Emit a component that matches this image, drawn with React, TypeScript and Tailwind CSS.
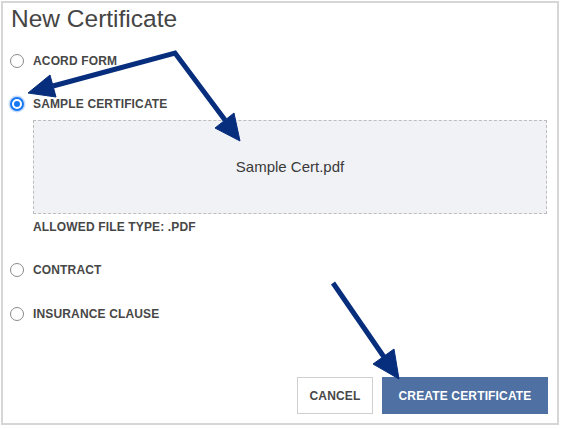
import React, { useState } from 'react';

type Option = { id: string; label: string };

const options: Option[] = [
  { id: 'acord', label: 'ACORD FORM' },
  { id: 'sample', label: 'SAMPLE CERTIFICATE' },
  { id: 'contract', label: 'CONTRACT' },
  { id: 'clause', label: 'INSURANCE CLAUSE' },
];

const Radio: React.FC<{ checked: boolean }> = ({ checked }) =>
  checked ? (
    <span className="w-[14px] h-[14px] rounded-full border-2 border-[#1877f2] bg-white flex items-center justify-center shadow-[0_0_0_1.5px_rgba(24,119,242,0.25)]">
      <span className="w-[6px] h-[6px] rounded-full bg-[#1877f2]" />
    </span>
  ) : (
    <span className="w-[14px] h-[14px] rounded-full border border-[#8a8a8a] bg-white" />
  );

const Arrows = () => (
  <svg className="absolute left-0 top-0 pointer-events-none" width="563" height="429" viewBox="0 0 563 429">
    <g fill="#072d7d" stroke="#072d7d">
      <polyline points="53,85 175,52 225,119" fill="none" strokeWidth="5" strokeLinejoin="miter" />
      <polygon points="28,92 56,96 50,74" strokeWidth="1" />
      <polygon points="240,140 215,127 234,112" strokeWidth="1" />
      <line x1="333" y1="282" x2="384" y2="356" strokeWidth="5" />
      <polygon points="399,378 373,363 394,348" strokeWidth="1" />
    </g>
  </svg>
);

export default function App() {
  const [selected, setSelected] = useState('sample');

  const row = (o: Option, mt: string) => (
    <button
      key={o.id}
      type="button"
      onClick={() => setSelected(o.id)}
      className={`${mt} h-[20px] flex items-center gap-[9px] pl-[7px] text-left`}
    >
      <Radio checked={selected === o.id} />
      <span className="text-[12px] font-bold tracking-[0.15px] text-[#474747] leading-none">{o.label}</span>
    </button>
  );

  return (
    <div className="relative w-[563px] h-[429px] bg-white" style={{ fontFamily: '"Liberation Sans", Arial, sans-serif' }}>
      <div className="ml-px mt-px w-[558px] h-[424px] border-2 border-[#d6d6d6] flex flex-col">
        <h2 className="mt-[2px] pl-[8px] text-[24.5px] leading-[28px] text-[#454545]">New Certificate</h2>

        {row(options[0], 'mt-[18px]')}
        {row(options[1], 'mt-[23px]')}

        <div className="mt-[6px] ml-[30px] mr-[10px] h-[94px] border border-dashed border-[#bdbdbd] bg-[#f1f2f6] flex items-center justify-center">
          <span className="text-[15px] text-[#3a3a3a]">Sample Cert.pdf</span>
        </div>
        <p className="mt-[5px] ml-[30px] text-[12px] leading-[16px] font-bold tracking-[0.15px] text-[#474747]">ALLOWED FILE TYPE: .PDF</p>

        {row(options[2], 'mt-[25px]')}
        {row(options[3], 'mt-[24px]')}

        <div className="mt-auto mb-[9px] mr-[9px] flex justify-end gap-[9px]">
          <button type="button" className="w-[76px] h-[37px] border border-[#cfcfcf] bg-white text-[12px] font-bold tracking-[0.15px] text-[#474747]">
            CANCEL
          </button>
          <button type="button" className="w-[166px] h-[37px] bg-[#4f70a2] text-[12px] font-bold tracking-[0.15px] text-white">
            CREATE CERTIFICATE
          </button>
        </div>
      </div>
      <Arrows />
    </div>
  );
}
